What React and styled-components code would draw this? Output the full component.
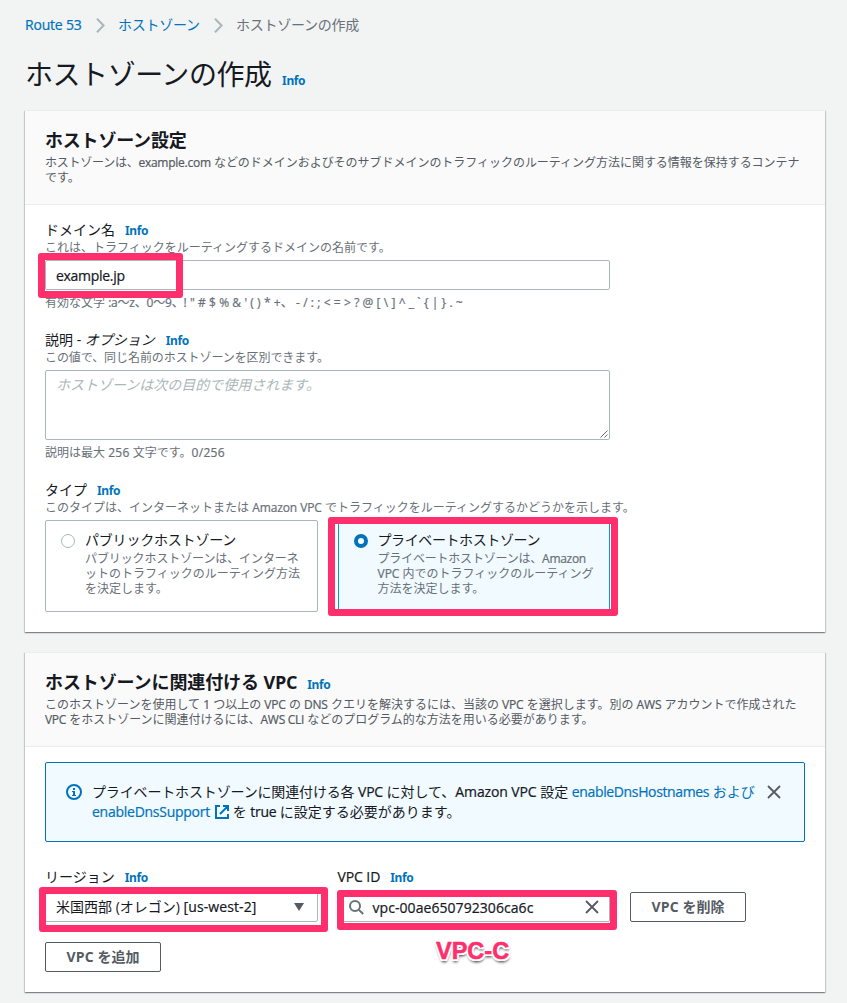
import React from 'react';
import styled, { createGlobalStyle, css } from 'styled-components';

const ink = '#16191f';
const link = '#0073bb';
const grey = '#687078';
const slate = '#545b64';
const line = '#aab7b8';
const pink = '#ff2e6c';

const GlobalStyle = createGlobalStyle`
  * {
    box-sizing: border-box;
  }
  body {
    margin: 0;
    background: #f2f3f3;
    color: ${ink};
    font-family: 'Open Sans', 'Noto Sans CJK JP', sans-serif;
    font-size: 14px;
    line-height: 20px;
  }
`;

let Page = styled.div`
  height: 1003px;
  padding: 15px 22px 0 25px;
  overflow: hidden;
  white-space: nowrap;
`;

let Breadcrumbs = styled.nav`
  display: flex;
  align-items: center;
  height: 20px;
`;

let Crumb = styled.span`
  width: ${({ width }) => width}px;
  color: ${({ current }) => (current ? grey : link)};
  letter-spacing: -0.25px;
`;

let Chevron = styled.svg`
  width: 9px;
  height: 15px;
  margin: 1px 13px 0 12px;
  fill: none;
  stroke: ${line};
  stroke-width: 2;
`;

// latin words inside a japanese sentence
let En = styled.span`
  font-weight: ${({ weight }) => weight || 400};
  letter-spacing: ${({ spacing = -0.3 }) => spacing}px;
  -webkit-text-stroke: ${({ weight }) => (weight ? 0 : 0.22)}px currentColor;
`;

let Jp = styled.span`
  letter-spacing: ${({ spacing = -0.2 }) => spacing}px;
`;

let Title = styled.h1`
  margin: 21px 0 18px;
  height: 36px;
  font-size: 28px;
  line-height: 36px;
  font-weight: 400;
`;

let InfoLink = styled.a`
  margin-left: ${({ gap = 10 }) => gap}px;
  color: ${link};
  font-family: 'Noto Sans', sans-serif;
  font-size: 12px;
  line-height: 15px;
  font-weight: 700;
  letter-spacing: -0.35px;
`;

let Card = styled.section`
  width: 800px;
  margin-bottom: 20px;
  background: #fff;
  border-top: 1px solid #eaeded;
  box-shadow: 0 1px 1px 0 rgba(0, 28, 36, 0.3),
    1px 1px 1px 0 rgba(0, 28, 36, 0.15), -1px 1px 1px 0 rgba(0, 28, 36, 0.15);
`;

let CardHeader = styled.header`
  height: 94px;
  padding: 18px 20px 0;
  background: #fafafa;
  border-bottom: 1px solid #eaeded;
`;

let CardTitle = styled.h2`
  margin: 0 0 4px;
  height: 22px;
  font-size: 18px;
  line-height: 22px;
  font-weight: 700;
`;

let CardBody = styled.div`
  padding: 15px 20px 20px;
`;

let Note = styled.div`
  color: ${({ dark }) => (dark ? slate : grey)};
  font-size: 12px;
  line-height: 15px;
`;

let Field = styled.div`
  position: relative;
  width: ${({ width = 565 }) => width}px;
  margin-bottom: ${({ last }) => (last ? 0 : 20)}px;
`;

let Label = styled.div`
  height: 20px;
`;

const controlStyle = css`
  display: flex;
  background: #fff;
  border: 1px solid ${line};
  border-radius: 2px;
  margin: 5px 0 ${({ flush }) => (flush ? 0 : 5)}px;
`;

let Input = styled.div`
  ${controlStyle} align-items: center;
  height: 30px;
  padding: 0 10px;
`;

let Value = styled.span`
  flex: 1;
  padding-top: ${({ drop = 0 }) => drop}px;
`;

let TextArea = styled.div`
  ${controlStyle} position: relative;
  height: 70px;
  padding: 4px 10px;
  color: ${line};
  font-style: italic;
`;

let Resizer = styled.svg`
  position: absolute;
  right: 1px;
  bottom: 1px;
  width: 8px;
  height: 8px;
  stroke: #666;
  fill: none;
`;

let Tiles = styled.div`
  display: grid;
  grid-template-columns: 1fr 1fr;
  gap: 20px;
  margin-top: 5px;
`;

let Tile = styled.div`
  display: flex;
  height: 92px;
  padding: 9px 15px;
  border: 1px solid ${({ selected }) => (selected ? '#00a1c9' : line)};
  border-radius: 2px;
  background: ${({ selected }) => (selected ? '#f1faff' : '#fff')};
`;

let Radio = styled.span`
  flex: none;
  width: 14px;
  height: 14px;
  margin: 4px 10px 0 0;
  border: ${({ selected }) =>
    selected ? `4px solid ${link}` : `1px solid ${line}`};
  border-radius: 50%;
  background: #fff;
`;

let TileNote = styled(Note)`
  margin-top: 1px;
`;

let Alert = styled.div`
  display: flex;
  height: 80px;
  padding: 19px 23px 0 20px;
  background: #f1faff;
  border: 1px solid ${link};
  border-radius: 2px;
`;

let AlertIcon = styled.svg`
  width: 16px;
  height: 16px;
  margin: 2px 10px 0 0;
  overflow: visible;
`;

let AlertText = styled.div`
  flex: 1;
`;

let Link = styled.a`
  color: ${link};
`;

let ExternalIcon = styled.svg`
  width: 14px;
  height: 14px;
  margin: 0 0 0 5px;
  vertical-align: -2px;
  fill: none;
  stroke: ${link};
  stroke-width: 2;
`;

let CloseIcon = styled.svg`
  width: 14px;
  height: 14px;
  margin-top: ${({ top = 0 }) => top}px;
  stroke: ${slate};
  stroke-width: 1.8;
`;

let SearchIcon = styled.svg`
  width: 16px;
  height: 16px;
  margin: 0 9px 0 -1px;
  fill: none;
  stroke: ${grey};
  stroke-width: 2;
`;

let Caret = styled.span`
  margin-right: 3px;
  border: 5.5px solid transparent;
  border-top: 8px solid ${slate};
  border-bottom: 0;
`;

let VpcRow = styled.div`
  display: flex;
  align-items: flex-end;
  gap: 20px;
  margin: 25px 0 20px;
`;

let Button = styled.button`
  display: block;
  width: 116px;
  height: 30px;
  padding: 0;
  color: ${slate};
  background: #fff;
  border: 1px solid ${slate};
  border-radius: 2px;
  font: inherit;
  font-weight: 700;
`;

let Marker = styled.div`
  position: absolute;
  left: ${({ x }) => x}px;
  top: ${({ y }) => y}px;
  width: ${({ w }) => w}px;
  height: ${({ h }) => h}px;
  border: 7px solid ${pink};
  border-radius: 3px;
`;

let Caption = styled.div`
  position: absolute;
  left: 98.5px;
  top: 71px;
  color: ${pink};
  font: bold 23.5px/27px 'Liberation Sans', sans-serif;
  -webkit-text-stroke: 0.5px ${pink};
  text-shadow: 2px 0 #fff, -2px 0 #fff, 0 2px #fff, 0 -2px #fff,
    1.5px 1.5px #fff, -1.5px 1.5px #fff, 1.5px -1.5px #fff, -1.5px -1.5px #fff,
    0 3px 3px rgba(0, 0, 0, 0.6), 1px 3px 3px rgba(0, 0, 0, 0.4);
`;

let Info = ({ gap }) => <InfoLink gap={gap}>Info</InfoLink>;

let Separator = () => (
  <Chevron viewBox="0 0 9 15">
    <path d="M1 .8 7.6 7.5 1 14.2" />
  </Chevron>
);

let Close = ({ top }) => (
  <CloseIcon top={top} viewBox="0 0 14 14">
    <path d="M1 1 13 13M13 1 1 13" />
  </CloseIcon>
);

class HostedZoneSettings extends React.Component {
  render() {
    return (
      <Card>
        <CardHeader>
          <CardTitle>
            <Jp>ホストゾーン設定</Jp>
          </CardTitle>
          <Note dark>
            <Jp spacing={-0.25}>ホストゾーンは、</Jp>
            <En spacing={-0.25}>example.com</En>{' '}
            <Jp spacing={-0.03}>
              などのドメインおよびそのサブドメインのトラフィックのルーティング方法に関する情報を保持するコンテナ
            </Jp>
            <br />
            です。
          </Note>
        </CardHeader>
        <CardBody>
          <Field>
            <Label>
              ドメイン名
              <Info />
            </Label>
            <Note>
              これは、トラフィックをルーティングするドメインの名前です。
            </Note>
            <Input>
              <Value drop={1}>
                <En>example.jp</En>
              </Value>
            </Input>
            <Note>
              有効な文字 <En spacing={-0.2}>:a〜z、0〜9、</En>
              <En spacing={0.08}>
                {'! " # $ % & \' ( ) * +、 - / : ; < = > ? @ [ \\ ] ^ _ ` { | } . ~'}
              </En>
            </Note>
            <Marker x={-7.5} y={33} w={145.5} h={45} />
          </Field>
          <Field>
            <Label>
              説明 - <i>オプション</i>
              <Info gap={11} />
            </Label>
            <Note>
              <Jp spacing={-0.08}>
                この値で、同じ名前のホストゾーンを区別できます。
              </Jp>
            </Note>
            <TextArea>
              ホストゾーンは次の目的で使用されます。
              <Resizer viewBox="0 0 8 8">
                <path d="M.5 7.5l7-7M4.5 7.5l3-3" />
              </Resizer>
            </TextArea>
            <Note>
              説明は最大 <En spacing={0.3}>256</En> 文字です。
              <En spacing={0.3}>0/256</En>
            </Note>
          </Field>
          <Field last>
            <Label>
              タイプ
              <Info />
            </Label>
            <Note>
              このタイプは、インターネットまたは{' '}
              <En spacing={-0.1}>Amazon VPC</En>{' '}
              でトラフィックをルーティングするかどうかを示します。
            </Note>
            <Tiles>
              <Tile>
                <Radio />
                <div>
                  <Jp>パブリックホストゾーン</Jp>
                  <TileNote>
                    <Jp spacing={-0.1}>パブリックホストゾーンは、インターネ</Jp>
                    <br />
                    ットのトラフィックのルーティング方法
                    <br />
                    を決定します。
                  </TileNote>
                </div>
              </Tile>
              <Tile selected>
                <Radio selected />
                <div>
                  <Jp spacing={-0.4}>プライベートホストゾーン</Jp>
                  <TileNote>
                    <Jp>プライベートホストゾーンは、</Jp>
                    <En>Amazon</En>
                    <br />
                    <En spacing={0}>VPC</En> 内でのトラフィックのルーティング
                    <br />
                    方法を決定します。
                  </TileNote>
                </div>
              </Tile>
            </Tiles>
            <Marker x={282.5} y={37} w={290.5} h={99} />
          </Field>
        </CardBody>
      </Card>
    );
  }
}

class VpcAssociation extends React.Component {
  render() {
    return (
      <Card>
        <CardHeader>
          <CardTitle>
            <Jp spacing={-0.1}>ホストゾーンに関連付ける</Jp>{' '}
            <En weight={700}>VPC</En>
            <Info />
          </CardTitle>
          <Note dark>
            このホストゾーンを使用して <En spacing={0}>1</En> つ以上の{' '}
            <En spacing={-0.15}>VPC</En> の <En spacing={-0.2}>DNS</En>{' '}
            クエリを解決するには、当該の <En spacing={-0.15}>VPC</En>{' '}
            を選択します。別の <En spacing={-0.15}>AWS</En>{' '}
            アカウントで作成された
            <br />
            <En>VPC</En> をホストゾーンに関連付けるには、<En>AWS CLI</En>{' '}
            などのプログラム的な方法を用いる必要があります。
          </Note>
        </CardHeader>
        <CardBody>
          <Alert>
            <AlertIcon viewBox="0 0 16 16">
              <circle
                cx="8"
                cy="8"
                r="7"
                fill="none"
                stroke={link}
                strokeWidth="2"
              />
              <path
                d="M7 4h2v2H7zM6 7h3v4h1v1H6v-1h1V8H6z"
                fill={link}
              />
            </AlertIcon>
            <AlertText>
              <Jp spacing={-0.15}>プライベートホストゾーンに関連付ける各</Jp>{' '}
              <En>VPC</En> に対して、
              <En spacing={-0.12}>Amazon VPC</En> 設定{' '}
              <Link>
                <En spacing={-0.36}>enableDnsHostnames</En> および
              </Link>
              <br />
              <Link>
                <En spacing={-0.26}>enableDnsSupport</En>
                <ExternalIcon viewBox="0 0 14 14">
                  <path d="M5 1H1v12h12V9M8 1h5v5M12.6 1.4 5 9" />
                </ExternalIcon>
              </Link>{' '}
              を <En>true</En> に設定する必要があります。
            </AlertText>
            <Close top={3} />
          </Alert>
          <VpcRow>
            <Field width={272.5} last>
              <Label>
                リージョン
                <Info />
              </Label>
              <Input flush>
                <Value>
                  米国西部 (オレゴン) <En spacing={0.1}>[us-west-2]</En>
                </Value>
                <Caret />
              </Input>
              <Marker x={-6} y={20} w={289} h={45} />
            </Field>
            <Field width={272.5} last>
              <Label>
                <En spacing={-0.1}>VPC ID</En>
                <Info />
              </Label>
              <Input flush>
                <SearchIcon viewBox="0 0 16 16">
                  <circle cx="7" cy="7" r="5" />
                  <path d="m10.6 10.6 4.6 4.4" />
                </SearchIcon>
                <Value drop={2}>
                  <En spacing={0.06}>vpc-00ae650792306ca6c</En>
                </Value>
                <Close />
              </Input>
              <Marker x={-1} y={23} w={280.5} h={40} />
              <Caption>VPC-C</Caption>
            </Field>
            <Button>
              <En weight={700} spacing={0.15}>
                VPC
              </En>{' '}
              を削除
            </Button>
          </VpcRow>
          <Button>
            <En weight={700} spacing={0.15}>
              VPC
            </En>{' '}
            を追加
          </Button>
        </CardBody>
      </Card>
    );
  }
}

class App extends React.Component {
  render() {
    return (
      <Page>
        <GlobalStyle />
        <Breadcrumbs>
          <Crumb width={59}>
            <En spacing={-0.2}>Route 53</En>
          </Crumb>
          <Separator />
          <Crumb width={84}>ホストゾーン</Crumb>
          <Separator />
          <Crumb current>ホストゾーンの作成</Crumb>
        </Breadcrumbs>
        <Title>
          <Jp spacing={-0.45}>ホストゾーンの作成</Jp>
          <Info gap={10.5} />
        </Title>
        <HostedZoneSettings />
        <VpcAssociation />
      </Page>
    );
  }
}

export default App;
